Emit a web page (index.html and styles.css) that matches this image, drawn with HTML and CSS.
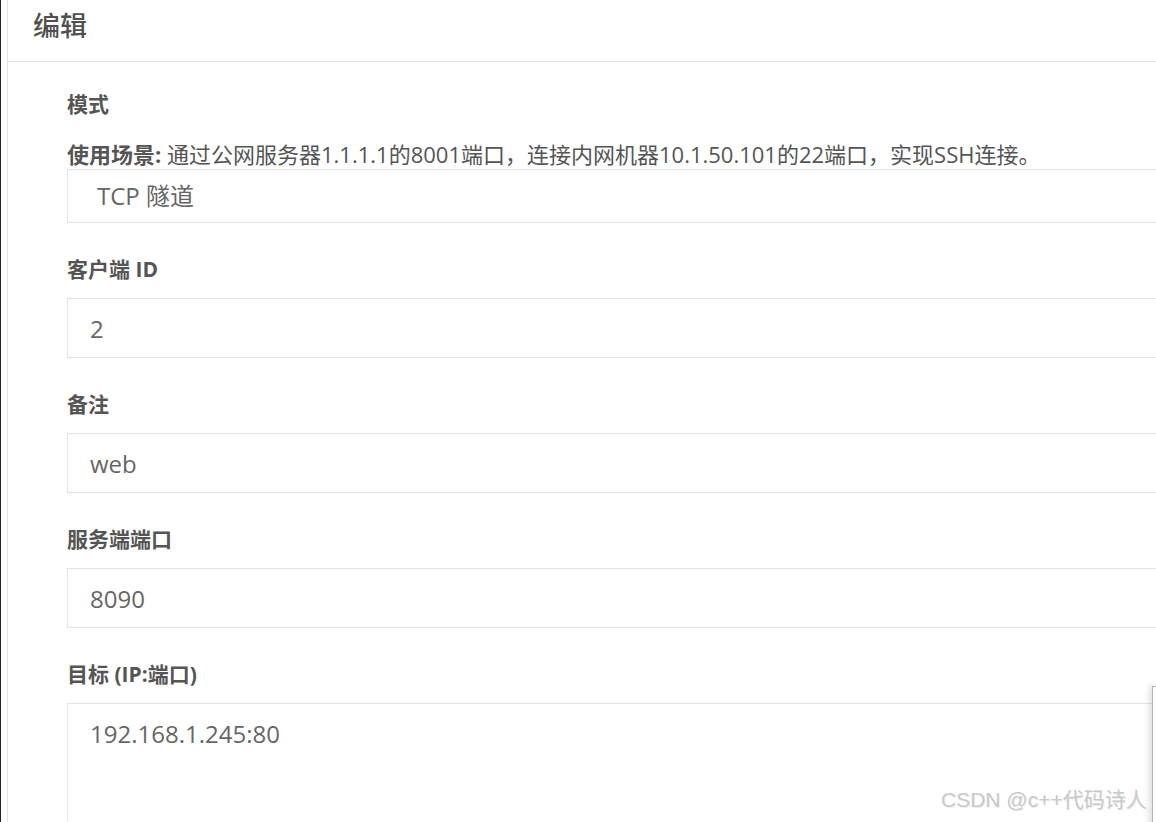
FILE: index.html
```html
<!DOCTYPE html>
<html lang="zh-CN">
<head>
<meta charset="utf-8">
<title>编辑</title>
<link rel="stylesheet" href="styles.css">
</head>
<body>
<div class="frame">
  <div class="panel">
    <div class="panel-head">
      <h2 class="panel-title">编辑</h2>
    </div>
    <form class="panel-body">
      <div class="group first">
        <label class="label">模式</label>
        <p class="hint"><b>使用场景:</b> 通过公网服务器1.1.1.1的8001端口，连接内网机器10.1.50.101的22端口，实现SSH连接。</p>
        <div class="field select">TCP 隧道</div>
      </div>
      <div class="group">
        <label class="label">客户端 ID</label>
        <input class="field" type="text" value="2" readonly>
      </div>
      <div class="group">
        <label class="label">备注</label>
        <input class="field" type="text" value="web" readonly>
      </div>
      <div class="group">
        <label class="label">服务端端口</label>
        <input class="field" type="text" value="8090" readonly>
      </div>
      <div class="group">
        <label class="label">目标 (IP:端口)</label>
        <textarea class="field area" readonly>192.168.1.245:80</textarea>
      </div>
    </form>
  </div>
  <div class="side-popup"></div>
  <div class="watermark">CSDN @c++代码诗人</div>
</div>
</body>
</html>
```
FILE: styles.css
```css
html, body {
  margin: 0;
  padding: 0;
  background: #fff;
  overflow: hidden;
  height: 100%;
}
body {
  font-family: "Open Sans", "Noto Sans CJK SC", sans-serif;
  color: #555;
}
.frame {
  position: relative;
  height: 822px;
  border-left: 1px solid #222;
  padding-left: 6px;
  overflow: hidden;
}
.panel {
  border-left: 1px solid #e4e4e4;
  height: 100%;
}
.panel-head {
  height: 61px;
  border-bottom: 1px solid #e6e6e6;
  display: flex;
  align-items: center;
  padding-left: 25px;
}
.panel-title {
  margin: 0;
  font-size: 27px;
  font-weight: 500;
  color: #505050;
  line-height: 1;
  position: relative;
  top: -5px;
}
.panel-body {
  padding: 27px 0 0 59px;
  margin: 0;
}
.group {
  margin-top: 31px;
}
.group.first {
  margin-top: 0;
}
.label {
  display: block;
  font-size: 21px;
  line-height: 30px;
  font-weight: bold;
  color: #555;
  margin-bottom: 14px;
}
.group.first .label {
  margin-bottom: 20px;
}
.hint {
  margin: 0;
  font-size: 22px;
  line-height: 30px;
  color: #555;
  white-space: nowrap;
}
.hint b {
  font-weight: bold;
}
.field {
  display: block;
  box-sizing: border-box;
  width: 1120px;
  height: 60px;
  margin: 0;
  border: 1px solid #e2e2e2;
  border-radius: 0;
  background: #fff;
  font-family: "Open Sans", "Noto Sans CJK SC", sans-serif;
  font-size: 24px;
  color: #666;
  padding: 0 0 0 22px;
  outline: none;
}
.select {
  height: 54px;
  line-height: 52px;
  padding-left: 29px;
}
.area {
  height: 160px;
  resize: none;
  padding-top: 14px;
  line-height: 32px;
}
.side-popup {
  position: absolute;
  left: 1151px;
  top: 686px;
  width: 60px;
  height: 200px;
  background: #fff;
  border-left: 1px solid #b5b5b5;
  border-top: 1px solid #b5b5b5;
  box-shadow: -3px 0 6px rgba(0, 0, 0, 0.12);
}
.watermark {
  position: absolute;
  left: 940px;
  top: 786px;
  font-family: "Liberation Sans", "Noto Sans CJK SC", sans-serif;
  font-size: 21px;
  font-weight: normal;
  line-height: 28px;
  color: #c9c9c9;
  text-shadow: 1px 1px 1px rgba(0, 0, 0, 0.08);
  white-space: nowrap;
}
```
